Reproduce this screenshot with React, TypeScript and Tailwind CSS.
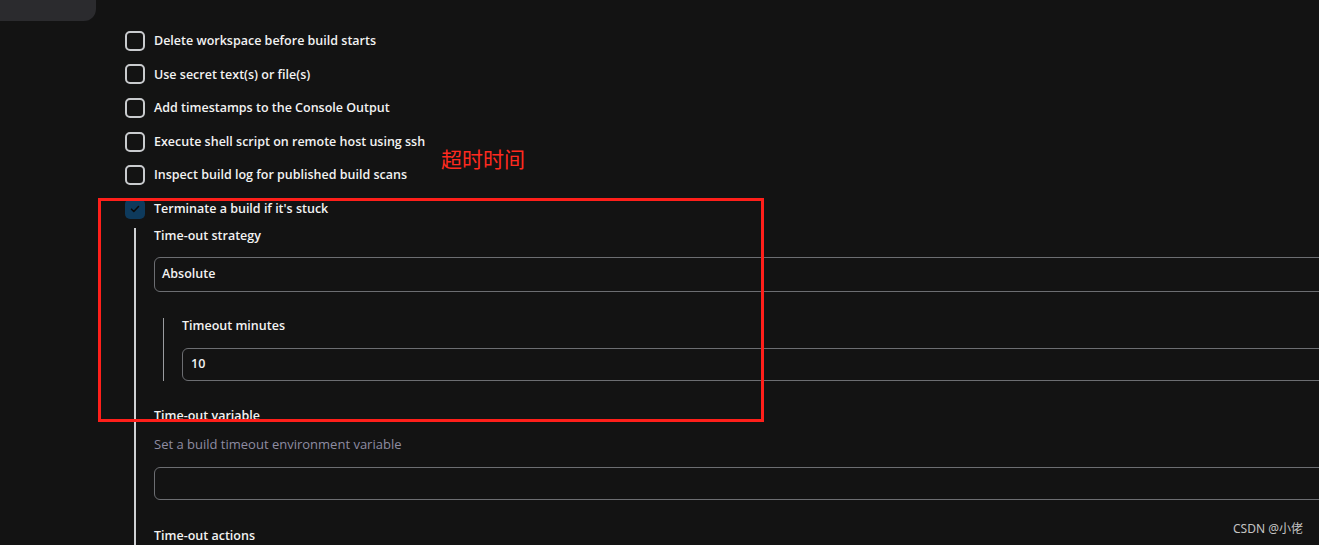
import React from "react";

const font = { fontFamily: '"Open Sans", "Noto Sans CJK SC", sans-serif' };

const options = [
  "Delete workspace before build starts",
  "Use secret text(s) or file(s)",
  "Add timestamps to the Console Output",
  "Execute shell script on remote host using ssh",
  "Inspect build log for published build scans",
];

const Box = ({ checked }: { checked?: boolean }) =>
  checked ? (
    <span className="flex h-[20px] w-[20px] shrink-0 items-center justify-center rounded-[5px] bg-[#0e3a5c]">
      <svg width="12" height="12" viewBox="0 0 12 12" fill="none">
        <path d="M2.5 6.2l2.3 2.3 4.7-5" stroke="#0a0a0a" strokeWidth="1.6" strokeLinecap="round" strokeLinejoin="round" />
      </svg>
    </span>
  ) : (
    <span className="h-[20px] w-[20px] shrink-0 rounded-[5px] border-2 border-[#c9cbce]" />
  );

const Row = ({ label, checked }: { label: string; checked?: boolean }) => (
  <div className="flex h-[33.6px] items-center gap-[9px]">
    <Box checked={checked} />
    <span className="pt-[1px] text-[12.5px] font-semibold text-[#f2f2f2]">{label}</span>
  </div>
);

const Label = ({ children, className }: { children: React.ReactNode; className: string }) => (
  <div className={`flex items-center text-[12.5px] font-semibold text-[#f2f2f2] ${className}`}>{children}</div>
);

export default function App() {
  return (
    <div className="relative h-[545px] w-full overflow-hidden bg-[#131313]" style={font}>
      <div className="h-[21px] w-[96px] rounded-br-[12px] bg-[#2b2b2e]" />

      <div className="mt-[3px] w-[1400px] pl-[125px]">
        {options.map((o) => (
          <Row key={o} label={o} />
        ))}
        <Row label="Terminate a build if it's stuck" checked />

        <div className="ml-[9px] mt-[2px] border-l-2 border-[#cfd1d4] pl-[18px] pt-[1px]">
          <Label className="h-[16px]">Time-out strategy</Label>
          <div className="mt-[12px] flex h-[35px] items-center rounded-[6px] border border-[#6c6e72] px-[7px] text-[12.5px] font-semibold text-[#f2f2f2]">
            Absolute
          </div>

          <div className="mt-[26px] ml-[9px] border-l border-[#9a9ca0] pl-[18px]">
            <Label className="h-[18px]">Timeout minutes</Label>
            <div className="mt-[12px] flex h-[33px] items-center rounded-[6px] border border-[#6c6e72] px-[8px] text-[12.5px] font-semibold text-[#f2f2f2]">
              10
            </div>
          </div>

          <Label className="mt-[28px] h-[16px]">Time-out variable</Label>
          <div className="mt-[12px] flex h-[16px] items-center text-[13px] text-[#8e8ca2]">Set a build timeout environment variable</div>
          <div className="mt-[14px] h-[33px] rounded-[6px] border border-[#6c6e72]" />
          <Label className="mt-[29px] h-[16px]">Time-out actions</Label>
          <div className="h-[40px]" />
        </div>
      </div>

      <div className="pointer-events-none absolute left-[98px] top-[198px] h-[224px] w-[666px] border-[3px] border-[#ff1f1a]" />
      <div
        className="absolute left-[441px] top-[145px] text-[21px] leading-[26px] text-[#ff2a1f]"
        style={{ fontFamily: '"Noto Sans CJK SC", sans-serif' }}
      >
        超时时间
      </div>
      <div
        className="absolute right-[16px] top-[520px] text-[12px] text-[#c4c4c4]"
        style={{ fontFamily: '"Noto Sans", "Noto Sans CJK SC", sans-serif' }}
      >
        CSDN @小佬
      </div>
    </div>
  );
}
